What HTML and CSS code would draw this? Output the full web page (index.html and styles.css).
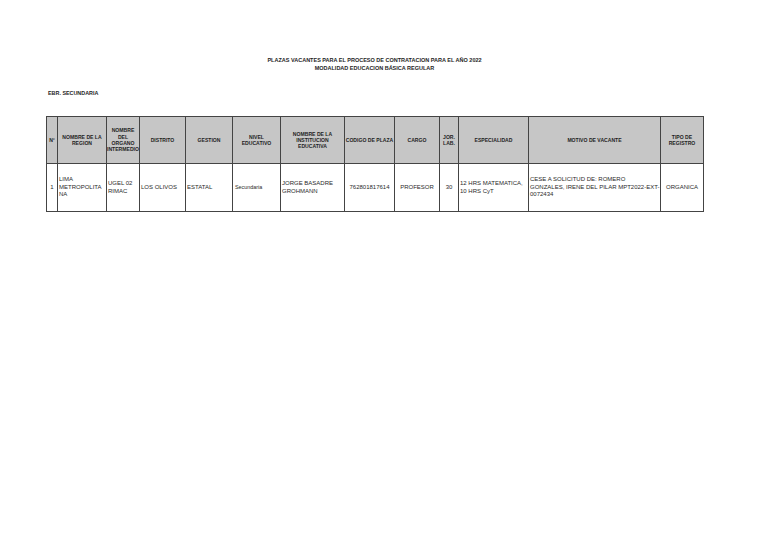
FILE: index.html
```html
<!DOCTYPE html>
<html lang="es">
<head>
<meta charset="utf-8">
<title>Plazas vacantes</title>
<link rel="stylesheet" href="styles.css">
</head>
<body>
<div class="page">
  <div class="title">
    <div>PLAZAS VACANTES PARA EL PROCESO DE CONTRATACION PARA EL AÑO 2022</div>
    <div>MODALIDAD EDUCACION BÁSICA REGULAR</div>
  </div>
  <div class="section">EBR. SECUNDARIA</div>
  <table class="grid">
    <colgroup>
      <col style="width:11px">
      <col style="width:49px">
      <col style="width:33px">
      <col style="width:46px">
      <col style="width:47px">
      <col style="width:48px">
      <col style="width:64px">
      <col style="width:50px">
      <col style="width:45px">
      <col style="width:19px">
      <col style="width:70px">
      <col style="width:132px">
      <col style="width:43px">
    </colgroup>
    <thead>
      <tr>
        <th>N°</th>
        <th>NOMBRE DE LA<br>REGION</th>
        <th>NOMBRE<br>DEL<br>ORGANO<br>INTERMEDIO</th>
        <th>DISTRITO</th>
        <th>GESTION</th>
        <th>NIVEL<br>EDUCATIVO</th>
        <th>NOMBRE DE LA<br>INSTITUCION<br>EDUCATIVA</th>
        <th>CODIGO DE PLAZA</th>
        <th>CARGO</th>
        <th>JOR.<br>LAB.</th>
        <th>ESPECIALIDAD</th>
        <th>MOTIVO DE VACANTE</th>
        <th>TIPO DE<br>REGISTRO</th>
      </tr>
    </thead>
    <tbody>
      <tr>
        <td class="c">1</td>
        <td>LIMA<br>METROPOLITA<br>NA</td>
        <td>UGEL 02<br>RIMAC</td>
        <td>LOS OLIVOS</td>
        <td>ESTATAL</td>
        <td class="sm">Secundaria</td>
        <td>JORGE BASADRE<br>GROHMANN</td>
        <td class="c">762801817614</td>
        <td class="c">PROFESOR</td>
        <td class="c">30</td>
        <td>12 HRS MATEMATICA,<br>10 HRS CyT</td>
        <td class="nw">CESE A SOLICITUD DE: ROMERO<br>GONZALES, IRENE DEL PILAR MPT2022-EXT-<br>0072434</td>
        <td class="c">ORGANICA</td>
      </tr>
    </tbody>
  </table>
</div>
</body>
</html>
```
FILE: styles.css
```css
html, body {
  margin: 0;
  padding: 0;
  background: #ffffff;
}
body {
  font-family: "Liberation Sans", Arial, sans-serif;
  color: #1e1e1e;
}
.page {
  padding: 56px 0 0 46px;
}
.title {
  width: 657px;
  text-align: center;
  font-weight: bold;
  font-size: 5.5px;
  line-height: 8px;
}
.section {
  margin-top: 17px;
  font-weight: bold;
  font-size: 5.4px;
  line-height: 8px;
  padding-left: 2px;
}
.grid {
  margin-top: 19px;
  border-collapse: collapse;
  table-layout: fixed;
  width: 657px;
  border: 1px solid #333;
}
.grid th, .grid td {
  border: 1px solid #444;
  padding: 0;
  overflow: hidden;
}
.grid th {
  background: #c6c6c6;
  height: 46px;
  font-size: 5.1px;
  line-height: 6.3px;
  font-weight: bold;
  text-align: center;
  vertical-align: middle;
  color: #1e1e1e;
}
.grid td {
  height: 47px;
  font-size: 6px;
  line-height: 7.5px;
  text-align: left;
  vertical-align: middle;
  color: #2a2a2a;
  padding-left: 1px;
}
.grid td.c {
  text-align: center;
  padding-left: 0;
}
.grid td.sm {
  font-size: 5.4px;
  padding-left: 2px;
}
.grid td.nw {
  white-space: nowrap;
}
```
